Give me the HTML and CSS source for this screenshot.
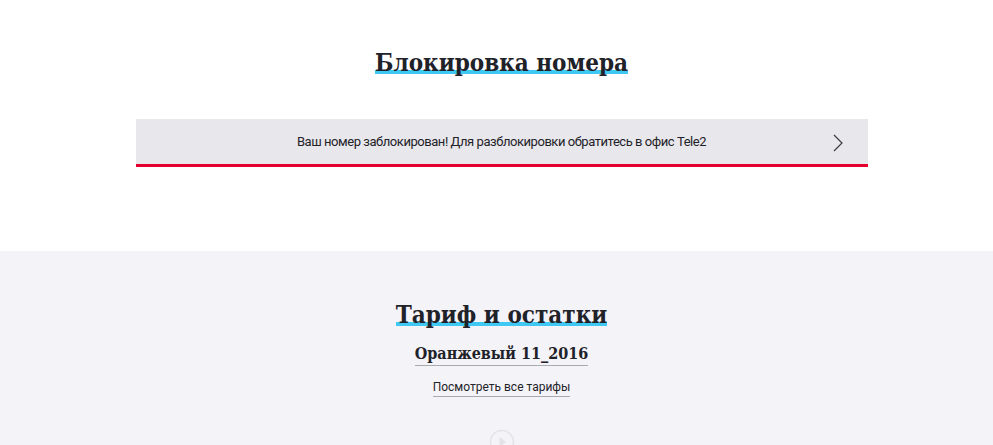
FILE: index.html
```html
<!DOCTYPE html>
<html lang="ru">
<head>
<meta charset="utf-8">
<link rel="stylesheet" href="styles.css">
</head>
<body>
<section class="block">
  <h2 class="title"><span class="title-text">Блокировка номера</span></h2>
  <a class="notice" href="#">
    <span class="notice-text">Ваш номер заблокирован! Для разблокировки обратитесь в офис Tele2</span>
    <svg class="chevron" width="10" height="18" viewBox="0 0 10 18"><path d="M1 1 L9 9 L1 17" fill="none" stroke="#3b3b45" stroke-width="1.2"/></svg>
  </a>
</section>
<section class="tariff">
  <h2 class="title"><span class="title-text">Тариф и остатки</span></h2>
  <div class="tariff-name">Оранжевый 11_2016</div>
  <a class="all-link" href="#">Посмотреть все тарифы</a>
  <div class="play">
    <svg width="26" height="26" viewBox="0 0 26 26"><circle cx="13" cy="13" r="11.5" fill="none" stroke="#e2e2e8" stroke-width="1.5"/><path d="M10.5 8 L17 13 L10.5 18 Z" fill="#e2e2e8"/></svg>
  </div>
</section>
</body>
</html>
```
FILE: styles.css
```css
html, body {
  margin: 0;
  padding: 0;
  background: #ffffff;
  color: #1f2229;
  font-family: Roboto, "Liberation Sans", sans-serif;
  overflow: hidden;
}
.block {
  height: 251px;
  padding: 47px 0 0 10px;
  box-sizing: border-box;
  display: flex;
  flex-direction: column;
  align-items: center;
}
.title {
  margin: 0;
  font-family: "DejaVu Serif Condensed", "DejaVu Serif", serif;
  font-weight: bold;
  font-size: 24px;
  line-height: 32px;
  color: #1f2229;
  text-align: center;
}
.title-text {
  background: linear-gradient(#3fc8f4, #3fc8f4) no-repeat left bottom 3px / 100% 4px;
}
.notice {
  margin-top: 40px;
  width: 732px;
  height: 48px;
  box-sizing: border-box;
  background: #e8e8ec;
  border-bottom: 3px solid #e4002b;
  display: flex;
  align-items: center;
  position: relative;
  justify-content: center;
  text-decoration: none;
  color: #1f2229;
}
.notice-text {
  font-size: 13px;
  letter-spacing: -0.45px;
}
.chevron {
  position: absolute;
  right: 25px;
  top: 15px;
}
.tariff {
  background: #f4f4f8;
  height: 194px;
  padding: 48px 0 0 10px;
  box-sizing: border-box;
  display: flex;
  flex-direction: column;
  align-items: center;
}
.tariff-name {
  margin-top: 12px;
  font-family: "DejaVu Serif Condensed", "DejaVu Serif", serif;
  font-weight: bold;
  font-size: 16px;
  line-height: 22px;
  border-bottom: 1px solid #a9a9b0;
}
.all-link {
  margin-top: 13px;
  font-size: 12px;
  line-height: 17px;
  color: #1f2229;
  text-decoration: none;
  border-bottom: 1px solid #a9a9b0;
}
.play {
  margin-top: 32px;
}
```
